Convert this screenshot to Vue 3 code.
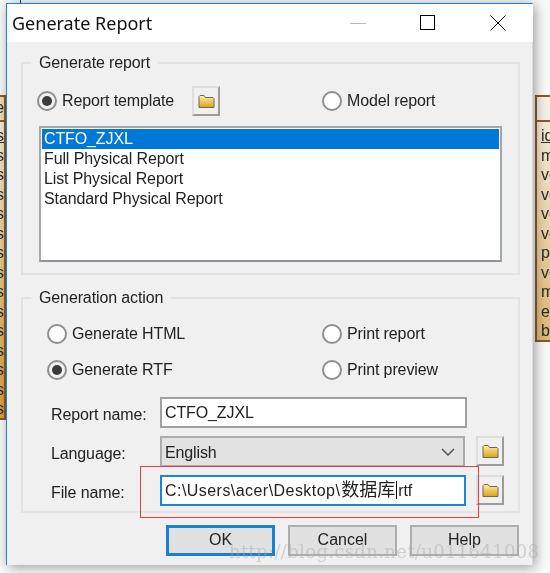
<script setup>
const leftRows = Array.from({ length: 15 }, () => 's')
const rightRows = ['id', 'm', 've', 've', 've', 've', 'pa', 've', 'm', 'e', 'b']
const templates = ['Full Physical Report', 'List Physical Report', 'Standard Physical Report']
</script>

<template>
  <div class="page">
    <div class="canvas-table left-table">
      <div class="table-head">e</div>
      <div class="table-rows">
        <div v-for="(r, i) in leftRows" :key="i" :class="{ first: i === 0 }">{{ r }}</div>
      </div>
    </div>
    <div class="canvas-table right-table">
      <div class="table-head"></div>
      <div class="table-rows">
        <div v-for="(r, i) in rightRows" :key="i" :class="{ first: i === 0 }">{{ r }}</div>
      </div>
    </div>
    <div class="top-stroke"></div>

    <div class="dialog">
      <div class="titlebar">
        <span class="title">Generate Report</span>
        <div class="controls">
          <span class="ctl"><svg width="16" height="16" viewBox="0 0 16 16"><path d="M0 8.500H16" stroke="#bbb" fill="none"/></svg></span>
          <span class="ctl"><svg width="16" height="16" viewBox="0 0 16 16"><rect x="0.500" y="0.500" width="14" height="14" stroke="#000" fill="none"/></svg></span>
          <span class="ctl"><svg width="16" height="16" viewBox="0 0 16 16"><path d="M.5.5L15.5 15.5M15.5.5L.5 15.5" stroke="#000" fill="none"/></svg></span>
        </div>
      </div>

      <div class="body">
        <fieldset class="group group-report">
          <legend>Generate report</legend>
          <div class="report-row">
            <label class="radio-item template-radio"><span class="radio on"></span>Report template</label>
            <button class="folder-btn">
              <svg width="17" height="15" viewBox="0 0 17 15"><defs><linearGradient id="fa" x1="0" y1="0" x2="0" y2="1"><stop offset="0" stop-color="#fff0a0"/><stop offset="1" stop-color="#dca020"/></linearGradient></defs><path d="M1 13.5V2.500L2 1.500H6L7.500 3.500H15L16 4.500V13.500Z" fill="url(#fa)" stroke="#6f6a52"/></svg>
            </button>
            <label class="radio-item model-radio"><span class="radio"></span>Model report</label>
          </div>
          <div class="listbox">
            <div class="list-row selected">CTFO_ZJXL</div>
            <div v-for="t in templates" :key="t" class="list-row">{{ t }}</div>
          </div>
        </fieldset>

        <fieldset class="group group-action">
          <legend>Generation action</legend>
          <div class="action-grid">
            <label class="radio-item"><span class="radio"></span>Generate HTML</label>
            <label class="radio-item"><span class="radio"></span>Print report</label>
            <label class="radio-item"><span class="radio on"></span>Generate RTF</label>
            <label class="radio-item"><span class="radio"></span>Print preview</label>
          </div>
          <div class="form">
            <div class="form-row">
              <span class="form-label">Report name:</span>
              <div class="field field-name">CTFO_ZJXL</div>
            </div>
            <div class="form-row">
              <span class="form-label">Language:</span>
              <div class="field field-select">
                <span>English</span>
                <svg width="14" height="8" viewBox="0 0 14 8"><path d="M1 1L7 7L13 1" stroke="#555" stroke-width="1.500" fill="none"/></svg>
              </div>
              <button class="folder-btn">
                <svg width="17" height="15" viewBox="0 0 17 15"><path d="M1 13.5V2.500L2 1.500H6L7.500 3.500H15L16 4.500V13.500Z" fill="url(#fa)" stroke="#6f6a52"/></svg>
              </button>
            </div>
            <div class="form-row">
              <span class="form-label">File name:</span>
              <div class="field field-file"><span class="path">C:\Users\acer\Desktop\</span><span class="cjk">数据库</span><i class="caret"></i>rtf</div>
              <button class="folder-btn">
                <svg width="17" height="15" viewBox="0 0 17 15"><path d="M1 13.5V2.500L2 1.500H6L7.500 3.500H15L16 4.500V13.500Z" fill="url(#fa)" stroke="#6f6a52"/></svg>
              </button>
            </div>
          </div>
        </fieldset>

        <div class="actions">
          <button class="btn btn-default">OK</button>
          <button class="btn">Cancel</button>
          <button class="btn">Help</button>
        </div>
      </div>
    </div>

    <div class="annotation"></div>
    <div class="watermark">http://blog.csdn.net/u011641008</div>
  </div>
</template>

<style>
html, body { margin: 0; background: #fff; }
</style>

<style scoped>
.page {
  position: relative;
  width: 550px;
  height: 573px;
  overflow: hidden;
  background: #fafafa;
  font-family: "Liberation Sans", Arial, "Noto Sans CJK SC", sans-serif;
  font-size: 16px;
  letter-spacing: -0.12px;
  color: #222;
  filter: blur(0.35px);
}
.top-stroke { position: absolute; left: 20px; top: 0; width: 1px; height: 3px; background: #333; }

.canvas-table {
  position: absolute;
  top: 95px;
  box-sizing: border-box;
  border: 2px solid #8a5a2c;
  background: linear-gradient(#f8f0e0, #d99f3c);
  overflow: hidden;
  color: #2a2a2a;
}
.left-table { left: -30px; width: 36px; height: 325px; text-align: right; }
.right-table { left: 535px; width: 60px; height: 247px; background: linear-gradient(#f8f0e0, #dfb878); }
.table-head {
  box-sizing: border-box;
  height: 25px;
  background: #f7f1e4;
  border-bottom: 2px solid #8a5a2c;
  line-height: 22px;
}
.left-table .table-head { background: #f0dcb8; }
.table-rows { padding-top: 4px; line-height: 19.5px; }
.right-table .table-rows { padding-left: 4px; }
.table-rows .first { text-decoration: underline; }

.dialog {
  position: relative;
  box-sizing: border-box;
  width: 527px;
  height: 562px;
  margin: 3px 0 0 6px;
  background: #f0f0f0;
  border: 1px solid #1a86d8;
  border-width: 1px 1px 0 1px;
  border-right-color: #d8d8d8;
  box-shadow: 2px 2px 12px rgba(0, 0, 0, 0.4);
}
.titlebar {
  display: flex;
  align-items: center;
  height: 38px;
  background: #fff;
  margin-right: -1px;
}
.title { margin-left: 5px; font-family: "Noto Sans", sans-serif; font-size: 18px; letter-spacing: 0; color: #111; }
.controls { display: flex; margin-left: auto; }
.ctl { display: flex; align-items: center; justify-content: center; width: 70px; height: 38px; }

.body { padding: 10px 12px 0 14px; }
.group {
  box-sizing: border-box;
  margin: 0;
  padding: 0;
  width: 499px;
  min-width: 0;
  border: 2px solid #e3e3e3;
}
.group legend { margin-left: 8px; padding: 0 8px; line-height: 22px; color: #222; }
.group-report { height: 223px; }
.group-action { height: 226px; margin-top: 12px; }

.radio-item { display: flex; align-items: center; gap: 5px; white-space: nowrap; }
.radio {
  box-sizing: border-box;
  position: relative;
  display: block;
  flex: none;
  width: 20px;
  height: 20px;
  border: 2px solid #8e8e8e;
  border-radius: 50%;
  background: #fff;
}
.radio.on { background: #f0f0f0; }
.radio.on::after {
  content: "";
  position: absolute;
  inset: 3px;
  border-radius: 50%;
  background: #3a3a3a;
}

.report-row { display: flex; align-items: center; height: 30px; margin: 12px 0 0 14px; }
.template-radio { width: 155px; }
.model-radio { margin-left: 102px; }
.folder-btn {
  box-sizing: border-box;
  display: flex;
  align-items: center;
  justify-content: center;
  flex: none;
  width: 28px;
  height: 30px;
  padding: 0;
  background: #f0f0f0;
  border: 2px solid;
  border-color: #dedede #9b9b9b #9b9b9b #dedede;
}

.listbox {
  box-sizing: border-box;
  width: 463px;
  height: 136px;
  margin: 10px 0 0 16px;
  padding: 1px;
  background: #fff;
  border: 2px solid;
  border-color: #a8a8a8 #a0a6b0 #8f949c #a8a8a8;
}
.list-row { height: 20px; padding-left: 2px; line-height: 19px; }
.list-row.selected { background: #0078d7; color: #fff; }

.action-grid {
  display: grid;
  grid-template-columns: 275px 1fr;
  grid-auto-rows: 36px;
  align-items: center;
  margin: 7px 0 0 24px;
}
.form { display: flex; flex-direction: column; gap: 8px; margin: 9px 0 0 28px; }
.form-row { display: flex; align-items: flex-start; height: 31px; }
.form-label { width: 109px; flex: none; line-height: 35px; }
.field {
  box-sizing: border-box;
  height: 31px;
  padding-left: 3px;
  line-height: 27px;
  background: #fff;
  border: 2px solid #a0a0a0;
}
.field-name { width: 307px; }
.field-select {
  display: flex;
  align-items: center;
  justify-content: space-between;
  width: 305px;
  margin-right: 11px;
  padding-right: 8px;
  padding-top: 1px;
  background: #e2e2e2;
  border-color: #adadad;
}
.field-file { width: 306px; margin-right: 10px; border-color: #1a86d8; white-space: nowrap; line-height: 26px; }
.path { letter-spacing: 0.45px; }
.cjk { font-size: 18px; letter-spacing: 0; margin-left: 1px; }
.caret { display: inline-block; width: 1px; height: 18px; margin: 0 1px; vertical-align: -3px; background: #000; }

.actions { display: flex; gap: 13px; justify-content: flex-end; margin: 12px 1px 0 0; }
.btn {
  box-sizing: border-box;
  width: 109px;
  height: 31px;
  padding: 0 0 1px;
  font: inherit;
  color: #222;
  background: #e1e1e1;
  border: 2px solid #adadad;
}
.btn-default { border: 3px solid #1a80d0; }

.annotation {
  position: absolute;
  left: 140px;
  top: 466px;
  box-sizing: border-box;
  width: 339px;
  height: 52px;
  border: 1px solid #ee3a3a;
  pointer-events: none;
}
.watermark {
  position: absolute;
  left: 229px;
  top: 541px;
  font-family: "DejaVu Serif", serif;
  font-size: 18px;
  letter-spacing: 0.35px;
  white-space: nowrap;
  color: rgba(170, 170, 170, 0.45);
  pointer-events: none;
}
</style>
